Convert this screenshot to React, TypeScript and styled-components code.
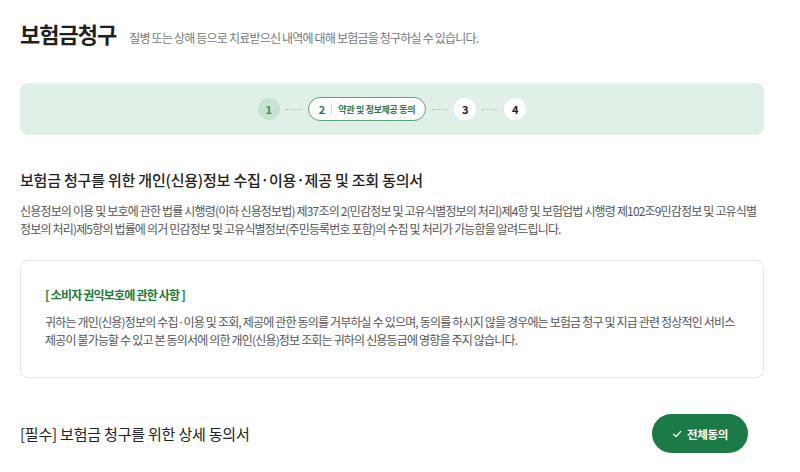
import styled, { createGlobalStyle } from 'styled-components';

const GlobalStyle = createGlobalStyle`
  body {
    margin: 0;
    background: #fff;
    font-family: "Noto Sans CJK KR", "Noto Sans", sans-serif;
    color: #222;
  }
`;

const steps = [
  { no: 1, state: 'done' },
  { no: 2, state: 'active', label: '약관 및 정보제공 동의' },
  { no: 3, state: 'todo' },
  { no: 4, state: 'todo' },
] as const;

const App = () => {
  return (
    <Page>
      <GlobalStyle />
      <Header>
        <Title>보험금청구</Title>
        <SubTitle>질병 또는 상해 등으로 치료받으신 내역에 대해 보험금을 청구하실 수 있습니다.</SubTitle>
      </Header>

      <StepBar>
        {steps.map((step, i) => (
          <StepGroup key={step.no}>
            {i > 0 && <Dots />}
            {step.state === 'active' ? (
              <ActivePill>
                <span>{step.no}</span>
                <Divider />
                <PillLabel>{step.label}</PillLabel>
              </ActivePill>
            ) : (
              <StepCircle $done={step.state === 'done'}>{step.no}</StepCircle>
            )}
          </StepGroup>
        ))}
      </StepBar>

      <SectionTitle>보험금 청구를 위한 개인(신용)정보 수집·이용·제공 및 조회 동의서</SectionTitle>
      <Paragraph>
        신용정보의 이용 및 보호에 관한 법률 시행령(이하 신용정보법) 제37조의 2(민감정보 및 고유식별정보의 처리)제4항 및 보험업법 시행령 제102조9민감정보 및 고유식별정보의 처리)제5항의 법률에 의거 민감정보 및 고유식별정보(주민등록번호 포함)의 수집 및 처리가 가능함을 알려드립니다.
      </Paragraph>

      <NoticeBox>
        <NoticeTitle>[ 소비자 권익보호에 관한 사항 ]</NoticeTitle>
        <Paragraph>
          귀하는 개인(신용)정보의 수집·이용 및 조회, 제공에 관한 동의를 거부하실 수 있으며, 동의를 하시지 않을 경우에는 보험금 청구 및 지급 관련 정상적인 서비스 제공이 불가능할 수 있고 본 동의서에 의한 개인(신용)정보 조회는 귀하의 신용등급에 영향을 주지 않습니다.
        </Paragraph>
      </NoticeBox>

      <AgreeRow>
        <AgreeTitle>[필수] 보험금 청구를 위한 상세 동의서</AgreeTitle>
        <AgreeAllButton>
          <svg width="10" height="10" viewBox="0 0 10 10" fill="none">
            <path d="M1.5 5.2 L4 7.6 L8.6 2.6" stroke="#fff" strokeWidth="1.4" strokeLinecap="round" strokeLinejoin="round" />
          </svg>
          전체동의
        </AgreeAllButton>
      </AgreeRow>
    </Page>
  );
};

export default App;

const Page = styled.div`
  width: 744px;
  padding: 17px 36px 0 20px;
`;

const Header = styled.div`
  display: flex;
  align-items: baseline;
  gap: 13px;
`;

const Title = styled.h1`
  margin: 0;
  font-size: 22px;
  font-weight: 700;
  letter-spacing: -1px;
  color: #1f1f1f;
`;

const SubTitle = styled.p`
  margin: 0;
  font-size: 12px;
  letter-spacing: -0.8px;
  color: #777;
`;

const StepBar = styled.div`
  margin-top: 34px;
  height: 52px;
  border-radius: 8px;
  background: #e1f0e6;
  display: flex;
  align-items: center;
  justify-content: center;
`;

const StepGroup = styled.div`
  display: flex;
  align-items: center;
`;

const Dots = styled.div`
  width: 16px;
  margin: 0 6px;
  border-top: 1px dotted #9fbfaa;
`;

const StepCircle = styled.div<{ $done: boolean }>`
  width: 22px;
  height: 22px;
  border-radius: 50%;
  display: flex;
  align-items: center;
  justify-content: center;
  font-size: 11px;
  font-weight: 700;
  background: ${({ $done }) => ($done ? '#c6e3d0' : '#fff')};
  color: ${({ $done }) => ($done ? '#3f8a5c' : '#222')};
`;

const ActivePill = styled.div`
  height: 22px;
  padding: 0 10px;
  border: 1px solid #5d9f76;
  border-radius: 12px;
  background: #fff;
  display: flex;
  align-items: center;
  gap: 6px;
  font-size: 11px;
  font-weight: 700;
  color: #2f7a4b;
`;

const Divider = styled.span`
  width: 1px;
  height: 9px;
  background: #c9d9ce;
`;

const PillLabel = styled.span`
  font-size: 9px;
  letter-spacing: -0.3px;
  color: #2f7a4b;
`;

const SectionTitle = styled.h2`
  margin: 34px 0 0;
  font-size: 15px;
  font-weight: 500;
  letter-spacing: -0.2px;
  color: #222;
`;

const Paragraph = styled.p`
  margin: 12px 0 0;
  font-size: 12px;
  line-height: 18px;
  letter-spacing: -0.83px;
  color: #555;
`;

const NoticeBox = styled.div`
  margin-top: 22px;
  padding: 25px 24px 28px;
  border: 1px solid #e4e4e4;
  border-radius: 8px;

  ${Paragraph} {
    margin-top: 10px;
  }
`;

const NoticeTitle = styled.div`
  font-size: 12px;
  font-weight: 700;
  letter-spacing: -0.8px;
  color: #217a3a;
`;

const AgreeRow = styled.div`
  margin-top: 36px;
  padding-right: 16px;
  display: flex;
  align-items: center;
  justify-content: space-between;
`;

const AgreeTitle = styled.h3`
  margin: 0;
  font-size: 15px;
  font-weight: 400;
  letter-spacing: -0.2px;
  color: #222;
`;

const AgreeAllButton = styled.button`
  height: 39px;
  padding: 0 20px;
  border: none;
  border-radius: 20px;
  background: #1b7a45;
  color: #fff;
  display: flex;
  align-items: center;
  gap: 5px;
  font-family: inherit;
  font-size: 11.5px;
  font-weight: 700;
  letter-spacing: -0.3px;
  cursor: pointer;
`;
